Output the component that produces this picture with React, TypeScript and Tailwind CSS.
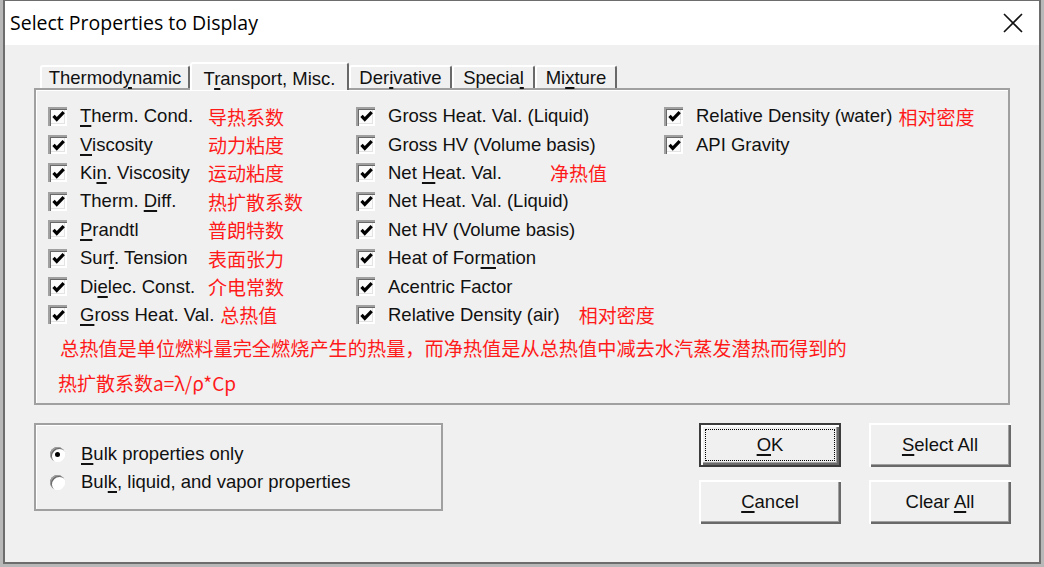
import React from "react";

const SANS = "font-['Liberation_Sans',Arial,sans-serif]";
const CJK = "font-['Noto_Sans_CJK_SC','Noto_Sans_CJK_JP',sans-serif]";

// "&" marks the mnemonic letter, like a Win32 resource string
function Mn({ text }: { text: string }) {
  const i = text.indexOf("&");
  if (i < 0) return <span>{text}</span>;
  return (
    <span className="whitespace-pre">
      {text.slice(0, i)}
      <u className="underline decoration-[1.5px] underline-offset-[3px]">{text[i + 1]}</u>
      {text.slice(i + 2)}
    </span>
  );
}

type Item = { label: string; note?: string; labelCls?: string };

const col1: Item[] = [
  { label: "&Therm. Cond.", note: "导热系数" },
  { label: "&Viscosity", note: "动力粘度" },
  { label: "Ki&n. Viscosity", note: "运动粘度" },
  { label: "Therm. &Diff.", note: "热扩散系数" },
  { label: "&Prandtl", note: "普朗特数" },
  { label: "Sur&f. Tension", note: "表面张力" },
  { label: "Di&elec. Const.", note: "介电常数" },
  { label: "&Gross Heat. Val.", note: "总热值" },
];

const col2: Item[] = [
  { label: "Gross Heat. Val. (Liquid)" },
  { label: "Gross HV (Volume basis)" },
  { label: "Net &Heat. Val.", note: "净热值", labelCls: "min-w-[162px]" },
  { label: "Net Heat. Val. (Liquid)" },
  { label: "Net HV (Volume basis)" },
  { label: "Heat of For&mation" },
  { label: "Acentric Factor" },
  { label: "Relative Density (air)", note: "相对密度", labelCls: "mr-[19px]" },
];

const col3: Item[] = [
  { label: "Relative Density (water)", note: "相对密度", labelCls: "mr-[6px]" },
  { label: "API Gravity" },
];

const tabs = [
  { label: "Thermod&ynamic", w: "w-[150px]" },
  { label: "T&ransport, Misc.", w: "w-[159px]", active: true },
  { label: "Der&ivative", w: "w-[103px]" },
  { label: "Specia&l", w: "w-[83px]" },
  { label: "Mi&xture", w: "w-[82px]" },
];

function Check() {
  return (
    <span className="w-[19px] h-[19px] shrink-0 bg-[#fbfbfb] flex items-center justify-center shadow-[inset_2px_2px_0_#a0a0a0,inset_3px_3px_0_#696969,inset_-2px_-2px_0_#ffffff,inset_-3px_-3px_0_#e3e3e3]">
      <svg viewBox="0 0 12 12" className="w-[13px] h-[13px] ml-[1px] mt-[1px]">
        <path d="M1.4 5.4 L4.4 8.6 L10.8 2" stroke="#000" strokeWidth="3" fill="none" strokeLinecap="butt" />
      </svg>
    </span>
  );
}

function Radio({ on }: { on?: boolean }) {
  return (
    <span className="w-[15px] h-[15px] shrink-0 rounded-full bg-white flex items-center justify-center shadow-[inset_1px_1px_0_#a0a0a0,inset_2px_2px_0_#696969,inset_-1px_-1px_0_#ffffff]">
      {on && <span className="w-[5px] h-[5px] rounded-full bg-black" />}
    </span>
  );
}

function Row({ item, first }: { item: Item; first?: boolean }) {
  return (
    <div className="flex items-center h-[28.4px] whitespace-nowrap">
      <Check />
      <span className={`ml-[13px] text-[18.5px] text-[#111] ${item.labelCls ?? (first ? "min-w-[122px] mr-[6px]" : "")}`}>
        <Mn text={item.label} />
      </span>
      {item.note && <span className={`${CJK} text-[19px] text-[#ff1a1a] leading-none`}>{item.note}</span>}
    </div>
  );
}

function Btn({ label, def }: { label: string; def?: boolean }) {
  return (
    <div className={`w-[142px] h-[44px] ${def ? "border-2 border-[#3c3c3c]" : ""}`}>
      <div className="w-full h-full bg-[#f0f0f0] flex p-[4px] shadow-[inset_2px_2px_0_#ffffff,inset_-2px_-2px_0_#696969,inset_-3px_-3px_0_#a0a0a0]">
        <div className={`flex-1 flex items-center justify-center text-[18.5px] text-[#111] ${def ? "border border-dotted border-black" : ""}`}>
          <Mn text={label} />
        </div>
      </div>
    </div>
  );
}

export default function App() {
  return (
    <div className={`w-[1044px] h-[567px] bg-[#b8b8b8] px-[3px] pb-[3px] ${SANS}`}>
      <div className="w-full h-full flex flex-col border-l-2 border-r-2 border-b-2 border-t border-[#6d6d6d] bg-[#f0f0f0]">
        {/* Title bar */}
        <div className="h-[44px] shrink-0 bg-white flex items-center justify-between pl-[5px] pr-[16px]">
          <span className="font-['Open_Sans','Noto_Sans',sans-serif] text-[19.5px] text-black">
            Select Properties to Display
          </span>
          <svg viewBox="0 0 20 20" className="w-[20px] h-[20px]">
            <path d="M1 1 L19 19 M19 1 L1 19" stroke="#111" strokeWidth="1.6" />
          </svg>
        </div>

        {/* Tabs */}
        <div className="mt-[17px] ml-[35px] flex items-end h-[28px] -mb-[2px] relative z-10">
          {tabs.map((t) =>
            t.active ? (
              <div
                key={t.label}
                className={`${t.w} h-[28px] bg-[#f0f0f0] border-l-2 border-t-2 border-r-2 border-l-white border-t-white border-r-[#696969] rounded-t-[3px] flex items-start justify-center pt-[1px] text-[18.5px] text-[#111]`}
              >
                <Mn text={t.label} />
              </div>
            ) : (
              <div
                key={t.label}
                className={`${t.w} h-[23px] mb-[2px] border-l-2 border-t-2 border-r-2 border-l-white border-t-white border-r-[#696969] rounded-t-[3px] flex items-center justify-center text-[18.5px] text-[#111]`}
              >
                <Mn text={t.label} />
              </div>
            )
          )}
        </div>

        {/* Panel */}
        <div className="ml-[29px] w-[976px] h-[317px] shrink-0 border-2 border-[#a0a0a0] shadow-[inset_1px_1px_0_#ffffff] pt-[12px] pl-[12px]">
          <div className="grid grid-cols-[308px_308px_1fr]">
            <div>
              {col1.map((it) => (
                <Row key={it.label} item={it} first />
              ))}
            </div>
            <div>
              {col2.map((it) => (
                <Row key={it.label} item={it} />
              ))}
            </div>
            <div>
              {col3.map((it) => (
                <Row key={it.label} item={it} />
              ))}
            </div>
          </div>
          <div className={`${CJK} text-[19.2px] text-[#ff1a1a] leading-[26px] mt-[6px] ml-[12px] whitespace-nowrap`}>
            总热值是单位燃料量完全燃烧产生的热量，而净热值是从总热值中减去水汽蒸发潜热而得到的
          </div>
          <div className={`${CJK} text-[19px] text-[#ff1a1a] leading-[26px] mt-[9px] ml-[10px]`}>
            热扩散系数a=λ/ρ*Cp
          </div>
        </div>

        {/* Bottom */}
        <div className="flex mt-[18px]">
          <div className="ml-[29px] w-[409px] h-[88px] border-2 border-[#a0a0a0] shadow-[inset_1px_1px_0_#ffffff] pt-[15px] pl-[14px]">
            <div className="flex items-center h-[28px] gap-[16px] text-[18.5px] text-[#111] whitespace-nowrap">
              <Radio on />
              <Mn text="&Bulk properties only" />
            </div>
            <div className="flex items-center h-[28px] gap-[16px] text-[18.5px] text-[#111] whitespace-nowrap">
              <Radio />
              <Mn text="Bul&k, liquid, and vapor properties" />
            </div>
          </div>
          <div className="ml-[256px] grid grid-cols-[142px_142px] gap-x-[28px] gap-y-[13px]">
            <Btn label="&OK" def />
            <Btn label="&Select All" />
            <Btn label="&Cancel" />
            <Btn label="Clear &All" />
          </div>
        </div>
      </div>
    </div>
  );
}
